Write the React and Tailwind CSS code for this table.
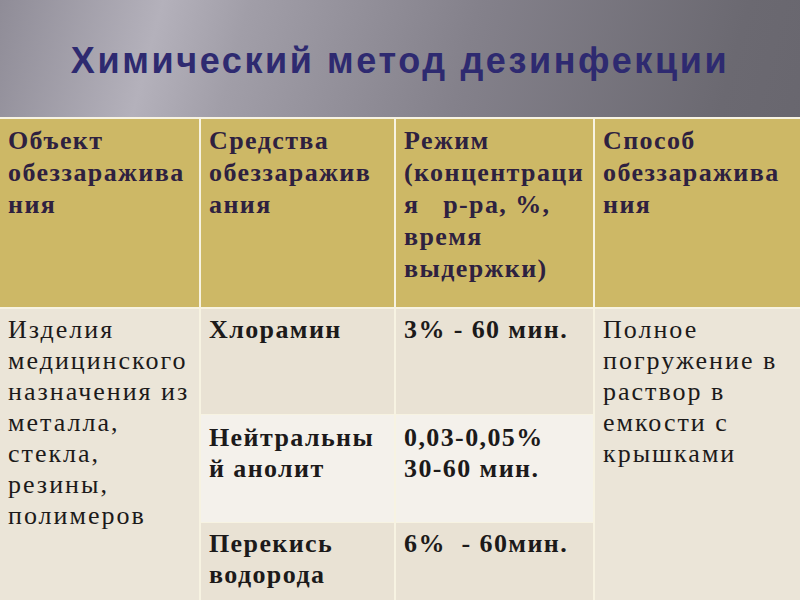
import React from 'react';

const serif = { fontFamily: '"Liberation Serif", "Times New Roman", serif' };

function HeadCell({ lines }) {
  return (
    <div className="bg-[#cdb866] pl-2 pt-[6px] text-[26px] leading-[32px] font-bold tracking-[1.4px] text-[#2e2140]" style={serif}>
      {lines.map((l, i) => (
        <div key={i} className="whitespace-pre">{l}</div>
      ))}
    </div>
  );
}

function BodyCell({ lines, bold, className = '' }) {
  return (
    <div
      className={`pl-2 pt-[5px] text-[26px] leading-[31px] text-[#1c1a1a] ${bold ? 'font-bold tracking-[1.4px]' : 'tracking-[2px]'} ${className}`}
      style={serif}
    >
      {lines.map((l, i) => (
        <div key={i} className="whitespace-pre">{l}</div>
      ))}
    </div>
  );
}

export default function App() {
  return (
    <div className="w-[800px] h-[600px] overflow-hidden flex flex-col bg-[linear-gradient(105deg,#8f8c97_0%,#b4b1bb_17%,#a19ea8_26%,#84818b_50%,#6b6971_78%,#65636b_100%)]">
      <div className="h-[117px] flex items-center justify-center pt-[5px]">
        <h1
          className="text-[36px] font-bold text-[#2e2a70] tracking-[2.6px]"
          style={{ fontFamily: '"Liberation Sans", Arial, sans-serif' }}
        >
          Химический метод дезинфекции
        </h1>
      </div>
      <div className="flex-1 grid grid-cols-[199px_193px_197px_1fr] grid-rows-[188px_106px_107px_1fr] gap-x-[2px] gap-y-[1px] bg-[#f7f3e2] pt-[2px]">
        <HeadCell lines={['Объект', 'обеззаражива', 'ния']} />
        <HeadCell lines={['Средства', 'обеззаражив', 'ания']} />
        <HeadCell lines={['Режим', '(концентраци', 'я   р-ра, %,', 'время', 'выдержки)']} />
        <HeadCell lines={['Способ', 'обеззаражива', 'ния']} />

        <BodyCell
          className="row-span-3 bg-[#ebe5d8] mt-[1px]"
          lines={['Изделия', 'медицинского', 'назначения из', 'металла,', 'стекла,', 'резины,', 'полимеров']}
        />
        <BodyCell bold className="bg-[#e9e2d4] mt-[1px]" lines={['Хлорамин']} />
        <BodyCell bold className="bg-[#e9e2d4] mt-[1px]" lines={['3% - 60 мин.']} />
        <BodyCell
          className="row-span-3 bg-[#ebe5d8] mt-[1px]"
          lines={['Полное', 'погружение в', 'раствор в', 'емкости с', 'крышками']}
        />

        <BodyCell bold className="bg-[#f4f1eb] pt-[7px]" lines={['Нейтральны', 'й анолит']} />
        <BodyCell bold className="bg-[#f4f1eb] pt-[7px]" lines={['0,03-0,05%', '30-60 мин.']} />

        <BodyCell bold className="bg-[#e9e2d4]" lines={['Перекись', 'водорода']} />
        <BodyCell bold className="bg-[#e9e2d4]" lines={['6%  - 60мин.']} />
      </div>
    </div>
  );
}
